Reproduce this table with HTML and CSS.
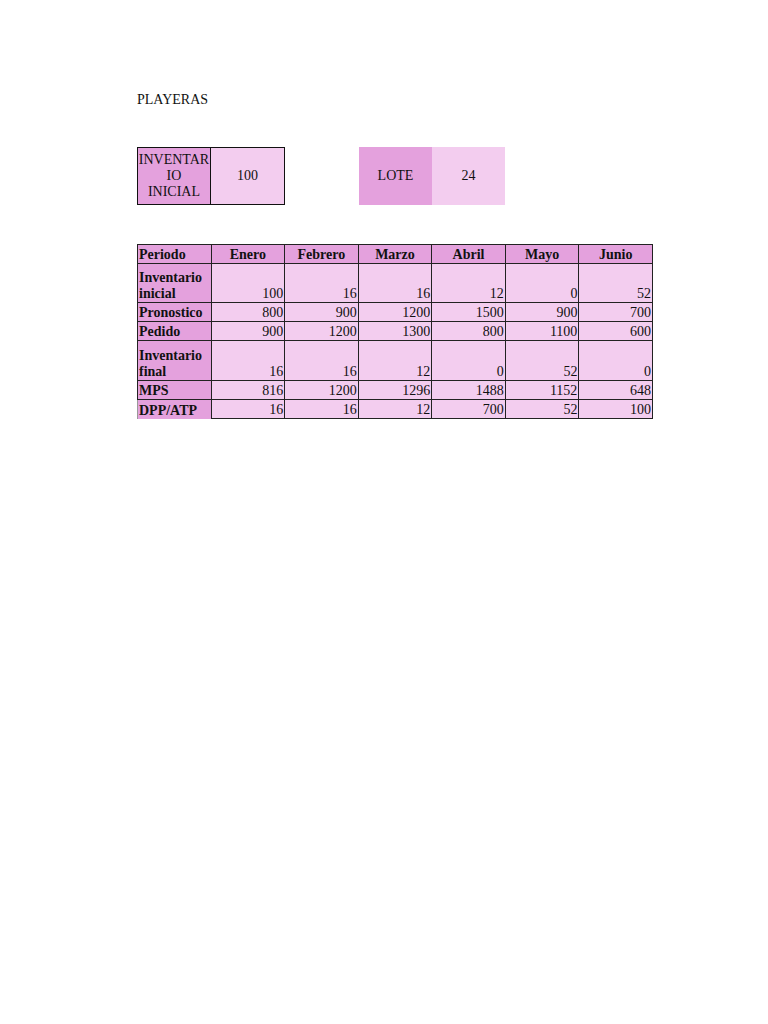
FILE: index.html
```html
<!DOCTYPE html>
<html>
<head>
<meta charset="utf-8">
<link rel="stylesheet" href="styles.css">
</head>
<body>
<div class="page">
  <div class="title">PLAYERAS</div>
  <div class="boxes">
    <div class="box bordered">
      <div class="cell dark">INVENTAR<br>IO<br>INICIAL</div>
      <div class="cell light val">100</div>
    </div>
    <div class="box">
      <div class="cell dark">LOTE</div>
      <div class="cell light val">24</div>
    </div>
  </div>
  <table class="mps">
    <tr class="r-head">
      <th class="lab">Periodo</th><th>Enero</th><th>Febrero</th><th>Marzo</th><th>Abril</th><th>Mayo</th><th>Junio</th>
    </tr>
    <tr class="r-tall">
      <th class="lab">Inventario inicial</th><td>100</td><td>16</td><td>16</td><td>12</td><td>0</td><td>52</td>
    </tr>
    <tr class="r-norm">
      <th class="lab">Pronostico</th><td>800</td><td>900</td><td>1200</td><td>1500</td><td>900</td><td>700</td>
    </tr>
    <tr class="r-norm">
      <th class="lab">Pedido</th><td>900</td><td>1200</td><td>1300</td><td>800</td><td>1100</td><td>600</td>
    </tr>
    <tr class="r-tall2">
      <th class="lab">Inventario final</th><td>16</td><td>16</td><td>12</td><td>0</td><td>52</td><td>0</td>
    </tr>
    <tr class="r-norm">
      <th class="lab">MPS</th><td>816</td><td>1200</td><td>1296</td><td>1488</td><td>1152</td><td>648</td>
    </tr>
    <tr class="r-norm">
      <th class="lab last">DPP/ATP</th><td>16</td><td>16</td><td>12</td><td>700</td><td>52</td><td>100</td>
    </tr>
  </table>
</div>
</body>
</html>
```

FILE: styles.css
```css
html, body {
  margin: 0;
  padding: 0;
  background: #ffffff;
}
body {
  font-family: "Liberation Serif", "Times New Roman", serif;
  font-size: 14px;
  color: #111111;
}
.page {
  padding: 91px 0 0 137px;
}
.title {
  line-height: 18px;
  height: 18px;
}
.boxes {
  display: flex;
  gap: 74px;
  margin-top: 38px;
}
.box {
  display: flex;
  height: 58px;
}
.box.bordered {
  border: 1px solid #111111;
  height: 56px;
}
.cell {
  width: 73px;
  display: flex;
  align-items: center;
  justify-content: center;
  text-align: center;
  line-height: 16px;
}
.box.bordered .cell.dark {
  width: 72px;
  border-right: 1px solid #111111;
}
.box.bordered .cell.light {
  width: 73px;
}
.dark {
  background: #e4a1dd;
}
.light {
  background: #f3cdef;
}
.mps {
  margin-top: 39px;
  border-collapse: collapse;
  table-layout: fixed;
  width: 516px;
}
.mps th, .mps td {
  border: 1px solid #222222;
  padding: 0 1px 0 1px;
  line-height: 16px;
  vertical-align: bottom;
}
.mps th {
  background: #e4a1dd;
  font-weight: bold;
  text-align: center;
}
.mps th.lab {
  text-align: left;
}
.mps th.last {
  border-bottom: none;
  border-left-color: #999999;
}
.mps td {
  background: #f3cdef;
  text-align: right;
}
.r-head { height: 19px; }
.r-tall { height: 39px; }
.r-tall2 { height: 40px; }
.r-norm { height: 19px; }
```
